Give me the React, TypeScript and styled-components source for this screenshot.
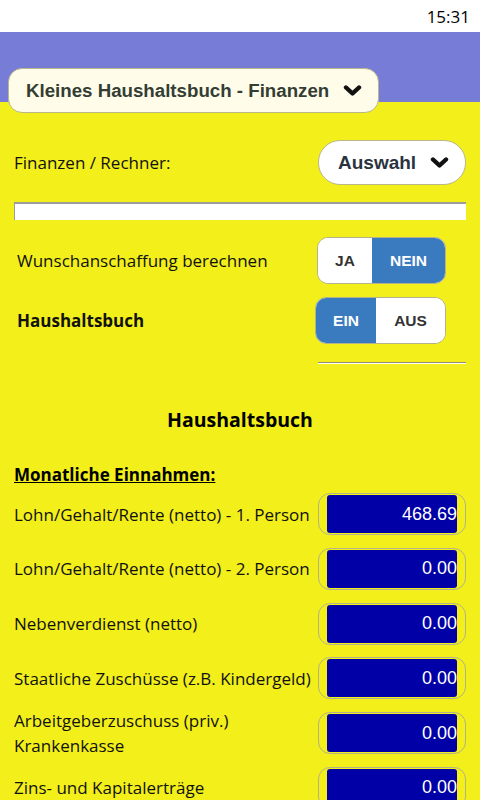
import { createGlobalStyle, styled } from "styled-components";

const GlobalStyle = createGlobalStyle`
  html, body {
    margin: 0;
    padding: 0;
  }
  body {
    font-family: "Open Sans", "Noto Sans", sans-serif;
  }
`;

type Income = { label: string; value: string };

const incomes: Income[] = [
  { label: "Lohn/Gehalt/Rente (netto) - 1. Person", value: "468.69" },
  { label: "Lohn/Gehalt/Rente (netto) - 2. Person", value: "0.00" },
  { label: "Nebenverdienst (netto)", value: "0.00" },
  { label: "Staatliche Zuschüsse (z.B. Kindergeld)", value: "0.00" },
  { label: "Arbeitgeberzuschuss (priv.) Krankenkasse", value: "0.00" },
  { label: "Zins- und Kapitalerträge", value: "0.00" },
];

const Chevron = () => (
  <svg width="19" height="13" viewBox="0 0 19 13" aria-hidden="true">
    <polyline
      points="3,3.5 9.5,9.5 16,3.5"
      fill="none"
      stroke="#111111"
      strokeWidth="4.4"
      strokeLinecap="round"
      strokeLinejoin="round"
    />
  </svg>
);

const App = () => {
  return (
    <StPage>
      <GlobalStyle />
      <StStatusBar>15:31</StStatusBar>
      <StMain>
        <StTitlePill>
          <span>Kleines Haushaltsbuch - Finanzen</span>
          <Chevron />
        </StTitlePill>

        <StRow $top={27}>
          <StLabel>Finanzen / Rechner:</StLabel>
          <StSelect>
            <span>Auswahl</span>
            <Chevron />
          </StSelect>
        </StRow>

        <StProgress />

        <StRow $top={17}>
          <StLabel $indent>Wunschanschaffung berechnen</StLabel>
          <StToggle>
            <StToggleItem $width={54}>JA</StToggleItem>
            <StToggleItem $width={73} $active>
              NEIN
            </StToggleItem>
          </StToggle>
        </StRow>

        <StRow $top={13}>
          <StLabel $indent $bold>
            Haushaltsbuch
          </StLabel>
          <StToggle>
            <StToggleItem $width={60} $active>
              EIN
            </StToggleItem>
            <StToggleItem $width={69}>AUS</StToggleItem>
          </StToggle>
        </StRow>

        <StDivider />

        <StHeading>Haushaltsbuch</StHeading>
        <StSubHeading>Monatliche Einnahmen:</StSubHeading>

        <StIncomeList>
          {incomes.map((item) => (
            <StIncomeRow key={item.label}>
              <StIncomeLabel>{item.label}</StIncomeLabel>
              <StAmountBox>
                <StAmount>{item.value}</StAmount>
              </StAmountBox>
            </StIncomeRow>
          ))}
        </StIncomeList>
      </StMain>
    </StPage>
  );
};

export default App;

const StPage = styled.div`
  display: flex;
  flex-direction: column;

  width: 480px;
  height: 800px;
  overflow: hidden;

  background: #f2ef1a;
`;

const StStatusBar = styled.div`
  display: flex;
  align-items: center;
  justify-content: flex-end;
  flex-shrink: 0;

  height: 32px;
  padding-right: 10px;

  background: #ffffff;
  color: #000000;
  font-family: "Open Sans", sans-serif;
  font-size: 17px;
`;

const StMain = styled.div`
  display: flex;
  flex-direction: column;

  padding: 36px 14px 0 14px;

  background: linear-gradient(#777cd6 0 70px, #f2ef1a 70px);
`;

const StTitlePill = styled.div`
  display: flex;
  align-items: center;
  gap: 14px;

  width: 371px;
  height: 45px;
  margin-left: -6px;
  padding-left: 17px;
  box-sizing: border-box;

  border: 1px solid #b9b68c;
  border-radius: 14px;
  background: #fffdea;
  color: #343d34;
  font-family: "Liberation Sans", Arial, sans-serif;
  font-size: 18.7px;
  font-weight: 700;
`;

const StRow = styled.div<{ $top: number }>`
  display: flex;
  align-items: center;
  justify-content: space-between;

  margin-top: ${({ $top }) => $top}px;
`;

const StLabel = styled.span<{ $indent?: boolean; $bold?: boolean }>`
  margin-left: ${({ $indent }) => ($indent ? 3 : 0)}px;

  color: #111111;
  font-size: 17px;
  font-weight: ${({ $bold }) => ($bold ? 700 : 400)};
`;

const StSelect = styled.div`
  display: flex;
  align-items: center;
  gap: 14px;

  width: 148px;
  height: 45px;
  padding-left: 19px;
  box-sizing: border-box;

  border: 1px solid #b9b68c;
  border-radius: 22px;
  background: #ffffff;
  color: #2a3440;
  font-family: "Liberation Sans", Arial, sans-serif;
  font-size: 19px;
  font-weight: 700;
`;

const StProgress = styled.div`
  height: 18px;
  margin-top: 17px;
  box-sizing: border-box;

  border-top: 2px solid #9c9c9c;
  border-left: 1px solid #9c9c9c;
  background: #ffffff;
`;

const StToggle = styled.div`
  display: flex;

  height: 47px;
  margin-right: 20px;
  overflow: hidden;
  box-sizing: border-box;

  border: 1px solid #b4b28c;
  border-radius: 11px;
  background: #ffffff;
`;

const StToggleItem = styled.div<{ $width: number; $active?: boolean }>`
  display: flex;
  align-items: center;
  justify-content: center;

  width: ${({ $width }) => $width}px;

  background: ${({ $active }) => ($active ? "#3a7bc0" : "#ffffff")};
  color: ${({ $active }) => ($active ? "#ffffff" : "#333333")};
  font-family: "Liberation Sans", Arial, sans-serif;
  font-size: 15.5px;
  font-weight: 700;
`;

const StDivider = styled.div`
  align-self: flex-end;

  width: 148px;
  height: 2px;
  margin-top: 18px;
  box-sizing: border-box;

  border-top: 1px solid #8f8d6e;
  background: #ffffff;
`;

const StHeading = styled.h2`
  margin: 42px 0 0 0;

  color: #000000;
  font-size: 19.5px;
  font-weight: 700;
  text-align: center;
`;

const StSubHeading = styled.h3`
  margin: 30px 0 0 0;

  color: #000000;
  font-size: 17px;
  font-weight: 700;
  text-decoration: underline;
`;

const StIncomeList = styled.div`
  display: flex;
  flex-direction: column;
  gap: 12.8px;

  margin-top: 7px;
`;

const StIncomeRow = styled.div`
  display: flex;
  align-items: center;
  justify-content: space-between;

  height: 42px;
`;

const StIncomeLabel = styled.span`
  max-width: 300px;

  color: #111111;
  font-size: 17px;
  line-height: 25px;
`;

const StAmountBox = styled.div`
  display: flex;
  flex-shrink: 0;

  width: 148px;
  height: 42px;
  padding: 1px 8px 1px 8px;
  box-sizing: border-box;

  border: 1px solid #b4b28c;
  border-radius: 12px;
`;

const StAmount = styled.div`
  display: flex;
  align-items: center;
  justify-content: flex-end;
  flex: 1;

  border-radius: 3px;
  background: #0000a6;
  color: #ffffff;
  font-family: "Liberation Sans", Arial, sans-serif;
  font-size: 18px;
`;
